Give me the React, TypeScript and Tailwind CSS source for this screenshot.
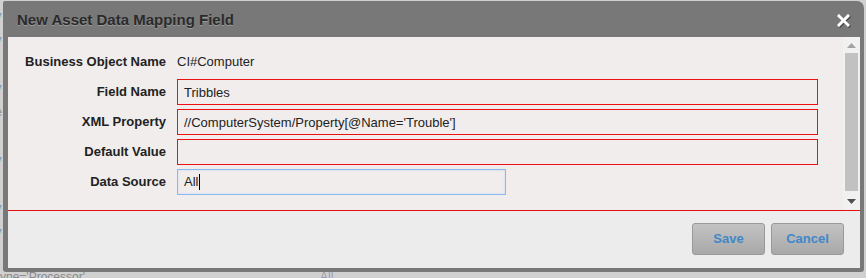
import React from "react";

const rows: { label: string; value: string; kind: "red" | "blue" }[] = [
  { label: "Field Name", value: "Tribbles", kind: "red" },
  { label: "XML Property", value: "//ComputerSystem/Property[@Name='Trouble']", kind: "red" },
  { label: "Default Value", value: "", kind: "red" },
];

export default function App() {
  return (
    <div
      className="relative w-[866px] h-[278px] overflow-hidden bg-[#d0d0d0]"
      style={{ fontFamily: '"Liberation Sans", Arial, sans-serif' }}
    >
      {/* page behind the modal */}
      <div className="absolute left-[-5px] top-[8px] flex flex-col gap-[8px] text-[13px] leading-[16px] text-[#7d92b3]">
        <span>v</span>
        <span>v</span>
        <span className="text-[#9a8f9a]">l</span>
        <span>v</span>
        <span className="text-[#999]">e</span>
        <span>r</span>
        <span>v</span>
        <span className="text-[#999]">t</span>
        <span>v</span>
        <span>v</span>
      </div>
      <div className="absolute left-0 top-[270px] flex text-[12px] leading-[14px] text-[#8a8a8a]">
        <span className="w-[320px]">ype='Processor'</span>
        <span className="text-[#9c9cb8]">All</span>
      </div>

      {/* modal */}
      <div className="absolute left-[3px] top-[1px] w-[861px] h-[271px] bg-[#787878] rounded-tr-[7px] rounded-tl-[2px] rounded-b-[3px] pl-[5px] pr-[4px] pb-[4px] flex flex-col">
        <div className="h-[36px] flex items-center justify-between pl-[9px] pr-[10px] shrink-0">
          <span className="text-[15px] font-bold text-[#2a2a2a] [text-shadow:0_1px_0_#9a9a9a] pt-[2px]">
            New Asset Data Mapping Field
          </span>
          <svg width="13" height="13" viewBox="0 0 13 13" className="mt-[2px] [filter:drop-shadow(1px_1px_0_#444)]">
            <path d="M2 2 L11 11 M11 2 L2 11" stroke="#ffffff" strokeWidth="3" strokeLinecap="square" />
          </svg>
        </div>

        <div className="flex h-[174px] bg-[#f0edec] border-b border-[#e40f0f] shrink-0">
          <div className="flex-1 pt-[12px]">
            <div className="grid grid-cols-[158px_1fr] gap-x-[11px] gap-y-[4px] text-[13px] text-[#222]">
              <div className="h-[26px] flex items-center justify-end font-bold">Business Object Name</div>
              <div className="h-[26px] flex items-center">CI#Computer</div>
              {rows.map((r) => (
                <React.Fragment key={r.label}>
                  <div className="h-[26px] flex items-center justify-end font-bold">{r.label}</div>
                  <input
                    readOnly
                    value={r.value}
                    className="h-[26px] w-[641px] border border-[#ee1111] bg-[#f0edec] px-[6px] text-[13px] text-[#222] outline-none"
                    style={{ fontFamily: '"Liberation Sans", Arial, sans-serif' }}
                  />
                </React.Fragment>
              ))}
              <div className="h-[26px] flex items-center justify-end font-bold">Data Source</div>
              <div className="h-[26px] w-[329px] border border-[#8db8ef] shadow-[inset_0_0_2px_#bcd5f3] bg-[#f0edec] px-[6px] flex items-center">
                <span>All</span>
                <span className="inline-block w-px h-[16px] bg-black ml-px" />
              </div>
            </div>
          </div>
          <div className="w-[17px] bg-[#f1f1f1] flex flex-col items-center">
            <svg width="9" height="5" viewBox="0 0 9 5" className="mt-[6px]">
              <path d="M0 5 L4.5 0 L9 5 Z" fill="#a3a3a3" />
            </svg>
            <div className="w-[13px] h-[138px] bg-[#c1c1c1] mt-[5px]" />
            <svg width="9" height="5" viewBox="0 0 9 5" className="mt-[8px]">
              <path d="M0 0 L9 0 L4.5 5 Z" fill="#505050" />
            </svg>
          </div>
        </div>

        <div className="flex-1 bg-[#ececec] flex justify-end items-start pt-[12px] pr-[16px] gap-[6px]">
          <button className="w-[73px] h-[32px] rounded-[3px] border border-[#999] bg-gradient-to-b from-[#c3c3c3] to-[#a8a8a8] text-[13px] font-bold text-[#3f87c9]">
            Save
          </button>
          <button className="w-[73px] h-[32px] rounded-[3px] border border-[#999] bg-gradient-to-b from-[#c3c3c3] to-[#a8a8a8] text-[13px] font-bold text-[#3f87c9]">
            Cancel
          </button>
        </div>
      </div>
    </div>
  );
}
